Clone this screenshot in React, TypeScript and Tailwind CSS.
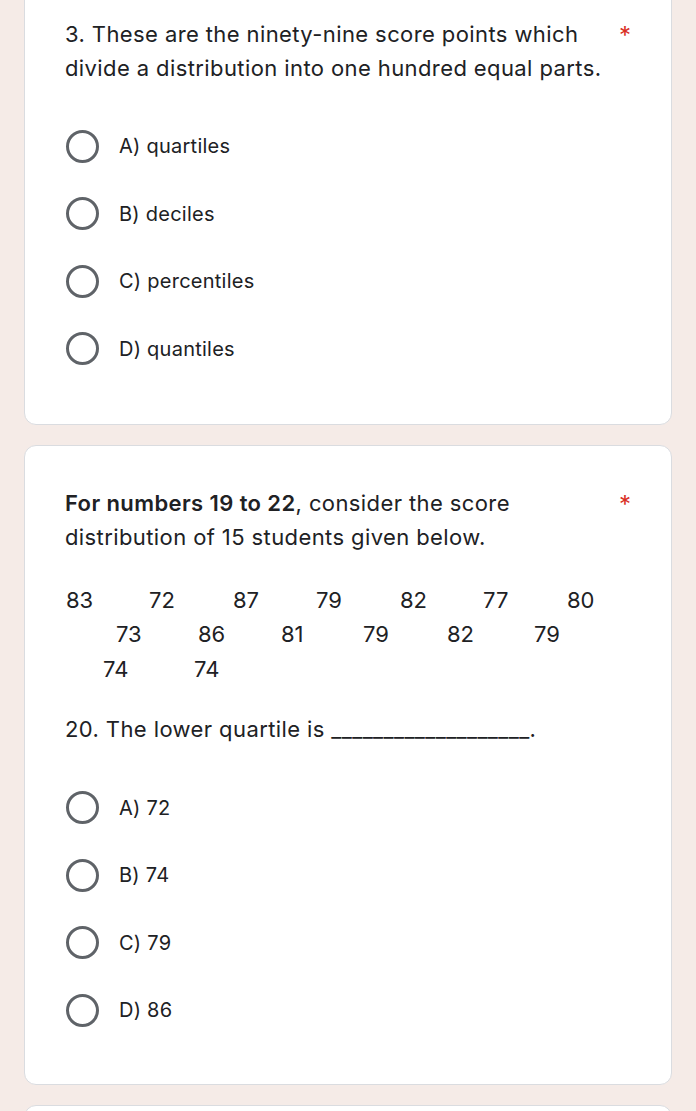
import React from "react";

const font = { fontFamily: "Inter, 'Noto Sans', sans-serif" };

function Radio({ label }: { label: string }) {
  return (
    <div className="flex h-[67.5px] items-center">
      <div className="ml-[1px] h-[33px] w-[33px] shrink-0 rounded-full border-[3px] border-[#5f6368]" />
      <span className="ml-[20px] text-[20px] leading-[28px] tracking-[0.25px] text-[#202124]">
        {label}
      </span>
    </div>
  );
}

function Card({ children, className = "" }: { children: React.ReactNode; className?: string }) {
  return (
    <div className={`rounded-[12px] border border-[#dadce0] bg-white px-[40px] ${className}`}>
      {children}
    </div>
  );
}

function Title({ children }: { children: React.ReactNode }) {
  return (
    <div className="flex items-start">
      <div className="w-[545px] text-[22px] leading-[34px] tracking-[0.4px] text-[#202124]">
        {children}
      </div>
      <span className="ml-[10px] mt-[2px] text-[24px] leading-[34px] text-[#d93025]">*</span>
    </div>
  );
}

export default function App() {
  return (
    <div className="min-h-screen bg-[#f5ebe7] px-[24px] pb-[40px]" style={font}>
      <div className="flex flex-col gap-[20px]">
        <Card className="-mt-[24px] pt-[40px] pb-[41px]">
          <Title>
            3. These are the ninety-nine score points which divide a distribution into one hundred
            equal parts.
          </Title>
          <div className="mt-[27.5px]">
            <Radio label="A) quartiles" />
            <Radio label="B) deciles" />
            <Radio label="C) percentiles" />
            <Radio label="D) quantiles" />
          </div>
        </Card>

        <Card className="pt-[40px] pb-[40px]">
          <Title>
            <span className="font-semibold">For numbers 19 to 22</span>, consider the score
            distribution of 15 students given below.
          </Title>

          <div className="mt-[29px] text-[22px] leading-[34.5px] text-[#202124]">
            <div className="flex">
              <span className="ml-[1px] w-[27px]">83</span>
              <span className="ml-[56px] w-[27px]">72</span>
              <span className="ml-[57px] w-[27px]">87</span>
              <span className="ml-[56px] w-[27px]">79</span>
              <span className="ml-[57px] w-[27px]">82</span>
              <span className="ml-[56px] w-[27px]">77</span>
              <span className="ml-[57px] w-[27px]">80</span>
            </div>
            <div className="flex">
              <span className="ml-[51px] w-[27px]">73</span>
              <span className="ml-[55px] w-[27px]">86</span>
              <span className="ml-[56px] w-[27px]">81</span>
              <span className="ml-[55px] w-[27px]">79</span>
              <span className="ml-[57px] w-[27px]">82</span>
              <span className="ml-[60px] w-[27px]">79</span>
            </div>
            <div className="flex">
              <span className="ml-[38px] w-[27px]">74</span>
              <span className="ml-[64px] w-[27px]">74</span>
            </div>
          </div>

          <div className="mt-[26px] text-[22px] leading-[34px] tracking-[0.4px] text-[#202124]">
            20. The lower quartile is ___________________.
          </div>

          <div className="mt-[28px]">
            <Radio label="A) 72" />
            <Radio label="B) 74" />
            <Radio label="C) 79" />
            <Radio label="D) 86" />
          </div>
        </Card>

        <Card className="h-[200px]">
          <div />
        </Card>
      </div>
    </div>
  );
}
